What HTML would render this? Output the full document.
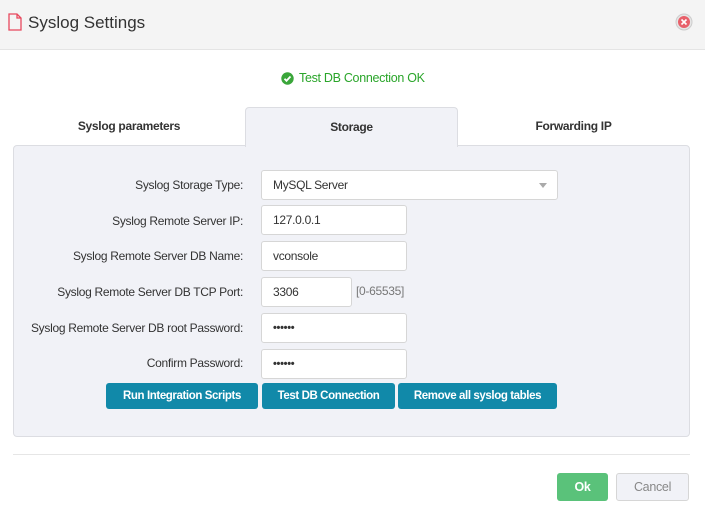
<!DOCTYPE html>
<html><head><style>
*{box-sizing:border-box;margin:0;padding:0}
body{width:705px;height:517px;background:#fff;font-family:"Liberation Sans",sans-serif;font-size:12px;letter-spacing:-0.3px;color:#333;position:relative;overflow:hidden}
.abs{position:absolute}
.hdr{left:0;top:0;width:705px;height:50px;background:#f4f4f4;border-bottom:1px solid #e4e4e4}
.title{left:28px;top:13px;font-size:17px;letter-spacing:0;color:#333}
.lbl{right:462px;text-align:right;white-space:nowrap;color:#333}
.inp{left:261px;height:30px;background:#fff;border:1px solid #d6d6d6;border-radius:3px;padding-left:11px;line-height:28px;color:#333}
.btn{top:383px;height:26px;background:#1189a9;color:#fff;font-weight:bold;border-radius:3px;text-align:center;line-height:26px;font-size:11.5px;letter-spacing:-0.4px}
.tab{top:107px;height:39px;line-height:39px;text-align:center;font-weight:bold;color:#333}
</style></head><body>
<div class="abs hdr"></div>
<svg class="abs" style="left:8px;top:13px" width="14" height="18" viewBox="0 0 14 18"><path d="M1 1h8l4 4v12H1z M9 1v4h4" fill="none" stroke="#e8485d" stroke-width="1.3"/></svg>
<div class="abs title">Syslog Settings</div>
<svg class="abs" style="left:675px;top:13px" width="18" height="18" viewBox="0 0 18 18"><circle cx="9" cy="9" r="8" fill="#e6e6e6" stroke="#ccc"/><circle cx="9" cy="9" r="6" fill="#e8606a"/><path d="M6.5 6.5l5 5M11.5 6.5l-5 5" stroke="#fff" stroke-width="1.6"/></svg>
<svg class="abs" style="left:281px;top:72px" width="13" height="13" viewBox="0 0 13 13"><circle cx="6.5" cy="6.5" r="6.2" fill="#3aa63a"/><path d="M3.5 6.8l2 2 4-4.3" stroke="#fff" stroke-width="1.8" fill="none"/></svg>
<div class="abs" style="left:299px;top:71px;color:#2aa52a;font-size:12.5px">Test DB Connection OK</div>
<div class="abs" style="left:13px;top:145px;width:677px;height:292px;background:#f1f2f7;border:1px solid #dcdde2;border-radius:4px"></div>
<div class="abs tab" style="left:245px;width:213px;background:#f1f2f7;border:1px solid #dcdde2;border-bottom:none;border-radius:4px 4px 0 0;height:40px">Storage</div>
<div class="abs tab" style="left:13px;width:232px">Syslog parameters</div>
<div class="abs tab" style="left:458px;width:231px">Forwarding IP</div>

<div class="abs lbl" style="top:178px">Syslog Storage Type:</div>
<div class="abs inp" style="top:170px;width:297px">MySQL Server</div>
<div class="abs" style="left:539px;top:183px;width:0;height:0;border-left:4px solid transparent;border-right:4px solid transparent;border-top:5px solid #aaa"></div>
<div class="abs lbl" style="top:214px">Syslog Remote Server IP:</div>
<div class="abs inp" style="top:205px;width:146px">127.0.0.1</div>
<div class="abs lbl" style="top:249px">Syslog Remote Server DB Name:</div>
<div class="abs inp" style="top:241px;width:146px">vconsole</div>
<div class="abs lbl" style="top:285px">Syslog Remote Server DB TCP Port:</div>
<div class="abs inp" style="top:277px;width:91px">3306</div>
<div class="abs" style="left:356px;top:284px;color:#777">[0-65535]</div>
<div class="abs lbl" style="top:321px">Syslog Remote Server DB root Password:</div>
<div class="abs inp" style="top:313px;width:146px;font-size:11px;font-weight:bold">••••••</div>
<div class="abs lbl" style="top:356px">Confirm Password:</div>
<div class="abs inp" style="top:349px;width:146px;font-size:11px;font-weight:bold">••••••</div>

<div class="abs btn" style="left:106px;width:152px">Run Integration Scripts</div>
<div class="abs btn" style="left:262px;width:133px">Test DB Connection</div>
<div class="abs btn" style="left:398px;width:159px">Remove all syslog tables</div>

<div class="abs" style="left:13px;top:454px;width:677px;height:1px;background:#e6e6e6"></div>
<div class="abs" style="left:557px;top:473px;width:51px;height:28px;background:#5ac27a;border-radius:3px;color:#fff;font-weight:bold;text-align:center;line-height:28px;font-size:12.5px">Ok</div>
<div class="abs" style="left:616px;top:473px;width:73px;height:28px;background:#f1f2f7;border:1px solid #d6d6d6;border-radius:3px;color:#888;text-align:center;line-height:26px;font-size:12.5px">Cancel</div>
</body></html>
